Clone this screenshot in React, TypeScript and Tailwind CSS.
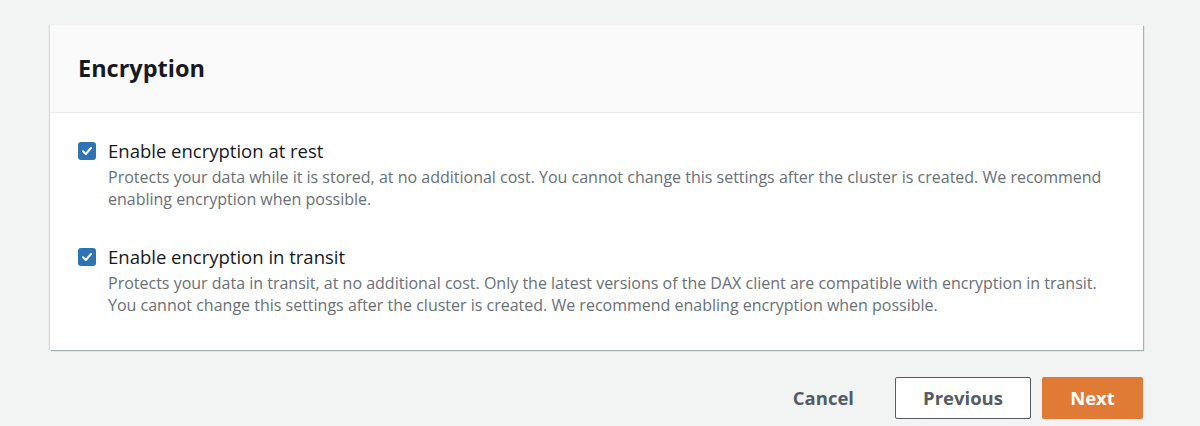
export default function App() {
  const options = [
    {
      label: "Enable encryption at rest",
      lines: [
        "Protects your data while it is stored, at no additional cost. You cannot change this settings after the cluster is created. We recommend",
        "enabling encryption when possible.",
      ],
    },
    {
      label: "Enable encryption in transit",
      lines: [
        "Protects your data in transit, at no additional cost. Only the latest versions of the DAX client are compatible with encryption in transit.",
        "You cannot change this settings after the cluster is created. We recommend enabling encryption when possible.",
      ],
    },
  ];

  return (
    <div
      className="min-h-screen bg-[#f2f3f3] pl-[50px] pr-[57px] pt-[25px]"
      style={{ fontFamily: '"Open Sans", "Liberation Sans", sans-serif' }}
    >
      <section className="w-[1093px] bg-white shadow-[1px_1px_1px_0_rgba(0,28,36,0.3),-1px_0_1px_0_rgba(0,28,36,0.12)]">
        <header className="flex h-[88px] items-center border-b border-[#eaeded] bg-[#fafafa] px-[28px]">
          <h2 className="text-[23.5px] font-bold text-[#16191f]">Encryption</h2>
        </header>
        <div className="flex flex-col gap-[37px] px-[28px] pt-[28px] pb-[34px]">
          {options.map((opt) => (
            <label key={opt.label} className="flex gap-[12px]">
              <span className="mt-[1px] flex h-[18px] w-[18px] shrink-0 items-center justify-center rounded-[3px] bg-[#2f73b7]">
                <svg width="12" height="12" viewBox="0 0 12 12" fill="none">
                  <path d="M2 6.2 L4.8 9 L10 3" stroke="white" strokeWidth="2" strokeLinecap="round" strokeLinejoin="round" />
                </svg>
              </span>
              <div>
                <p className="text-[18.5px] leading-[20px] text-[#16191f]">{opt.label}</p>
                <p className="mt-[5px] text-[16px] leading-[22px] text-[#687078] whitespace-nowrap">
                  {opt.lines[0]}
                  <br />
                  {opt.lines[1]}
                </p>
              </div>
            </label>
          ))}
        </div>
      </section>

      <div className="mt-[27px] flex w-[1093px] items-center justify-end gap-[11px]">
        <button className="mr-[30px] text-[18.5px] font-bold text-[#545b64]">Cancel</button>
        <button className="h-[42px] w-[136px] rounded-[2px] border border-[#545b64] bg-white text-[18.5px] font-bold text-[#545b64]">
          Previous
        </button>
        <button className="h-[42px] w-[101px] rounded-[2px] bg-[#e07a35] text-[18.5px] font-bold text-white">Next</button>
      </div>
    </div>
  );
}
